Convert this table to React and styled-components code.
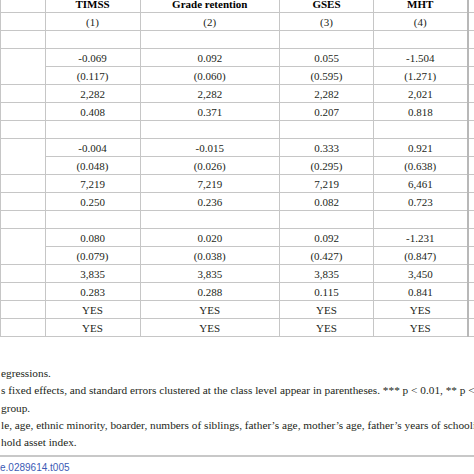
import React from "react";
import styled, { createGlobalStyle } from "styled-components";

const GlobalStyle = createGlobalStyle`
  html, body {
    margin: 0;
    padding: 0;
    background: #ffffff;
    overflow: hidden;
  }
`;

const Page = styled.div`
  width: 474px;
  height: 474px;
  overflow: hidden;
  font-family: "Liberation Serif", "DejaVu Serif", serif;
  color: #231f20;
`;

const Table = styled.table`
  margin-top: -6px;
  border-collapse: collapse;
  table-layout: fixed;
  width: 500px;
  font-size: 11px;
`;

const Cell = styled.td`
  height: 17px;
  padding: 0;
  text-align: center;
  vertical-align: middle;
  line-height: 12px;
  border: 1px solid #c6c6c6;
  border-left-color: ${(p) => (p.$edge ? "#b8b8b8" : "#c6c6c6")};
  border-left-width: ${(p) => (p.$edge ? "2px" : "1px")};
  white-space: nowrap;
`;

const HeadCell = styled(Cell).attrs({ as: "th" })`
  font-weight: 700;
  color: #000;
`;

const Notes = styled.div`
  margin-top: 28px;
  font-size: 11.3px;
  line-height: 17.3px;
  white-space: nowrap;
  padding-left: 1px;
`;

const NoteLine = styled.div`
  overflow: hidden;
`;

const Rule = styled.hr`
  margin: 4px 0 0;
  border: 0;
  height: 2px;
  background: #c8c8c8;
`;

const DoiLink = styled.a`
  display: block;
  margin-top: 5px;
  font-family: "Liberation Sans", Arial, sans-serif;
  font-size: 10px;
  line-height: 12px;
  color: #3b5bb5;
  text-decoration: none;
  white-space: nowrap;
`;

const groups = [
  {
    coef: ["-0.069", "0.092", "0.055", "-1.504"],
    se: ["(0.117)", "(0.060)", "(0.595)", "(1.271)"],
    n: ["2,282", "2,282", "2,282", "2,021"],
    r2: ["0.408", "0.371", "0.207", "0.818"],
  },
  {
    coef: ["-0.004", "-0.015", "0.333", "0.921"],
    se: ["(0.048)", "(0.026)", "(0.295)", "(0.638)"],
    n: ["7,219", "7,219", "7,219", "6,461"],
    r2: ["0.250", "0.236", "0.082", "0.723"],
  },
  {
    coef: ["0.080", "0.020", "0.092", "-1.231"],
    se: ["(0.079)", "(0.038)", "(0.427)", "(0.847)"],
    n: ["3,835", "3,835", "3,835", "3,450"],
    r2: ["0.283", "0.288", "0.115", "0.841"],
  },
];

const ValueRow = ({ values, label = true, rowSpan }) => (
  <tr>
    {label && <Cell rowSpan={rowSpan} />}
    {values.map((v, i) => (
      <Cell key={i}>{v}</Cell>
    ))}
    <Cell $edge />
  </tr>
);

const EmptyRow = () => <ValueRow values={["", "", "", ""]} />;

export default function App() {
  return (
    <Page>
      <GlobalStyle />
      <Table>
        <colgroup>
          <col style={{ width: "44.5px" }} />
          <col style={{ width: "95px" }} />
          <col style={{ width: "139.5px" }} />
          <col style={{ width: "94px" }} />
          <col style={{ width: "94px" }} />
          <col style={{ width: "33px" }} />
        </colgroup>
        <thead>
          <tr>
            <HeadCell />
            <HeadCell>TIMSS</HeadCell>
            <HeadCell>Grade retention</HeadCell>
            <HeadCell>GSES</HeadCell>
            <HeadCell>MHT</HeadCell>
            <HeadCell $edge />
          </tr>
        </thead>
        <tbody>
          <ValueRow values={["(1)", "(2)", "(3)", "(4)"]} />
          {groups.map((g, i) => (
            <React.Fragment key={i}>
              <EmptyRow />
              <ValueRow values={g.coef} rowSpan={2} />
              <ValueRow values={g.se} label={false} />
              <ValueRow values={g.n} />
              <ValueRow values={g.r2} />
            </React.Fragment>
          ))}
          <ValueRow values={["YES", "YES", "YES", "YES"]} />
          <ValueRow values={["YES", "YES", "YES", "YES"]} />
        </tbody>
      </Table>
      <Notes>
        <NoteLine>egressions.</NoteLine>
        <NoteLine>
          s fixed effects, and standard errors clustered at the class level
          appear in parentheses. *** p &lt; 0.01, ** p &lt; 0.05, * p &lt; 0.1.
        </NoteLine>
        <NoteLine>group.</NoteLine>
        <NoteLine>
          le, age, ethnic minority, boarder, numbers of siblings, father’s age,
          mother’s age, father’s years of schooling, mother’s years of schooling
        </NoteLine>
        <NoteLine>hold asset index.</NoteLine>
      </Notes>
      <Rule />
      <DoiLink href="#">e.0289614.t005</DoiLink>
    </Page>
  );
}
